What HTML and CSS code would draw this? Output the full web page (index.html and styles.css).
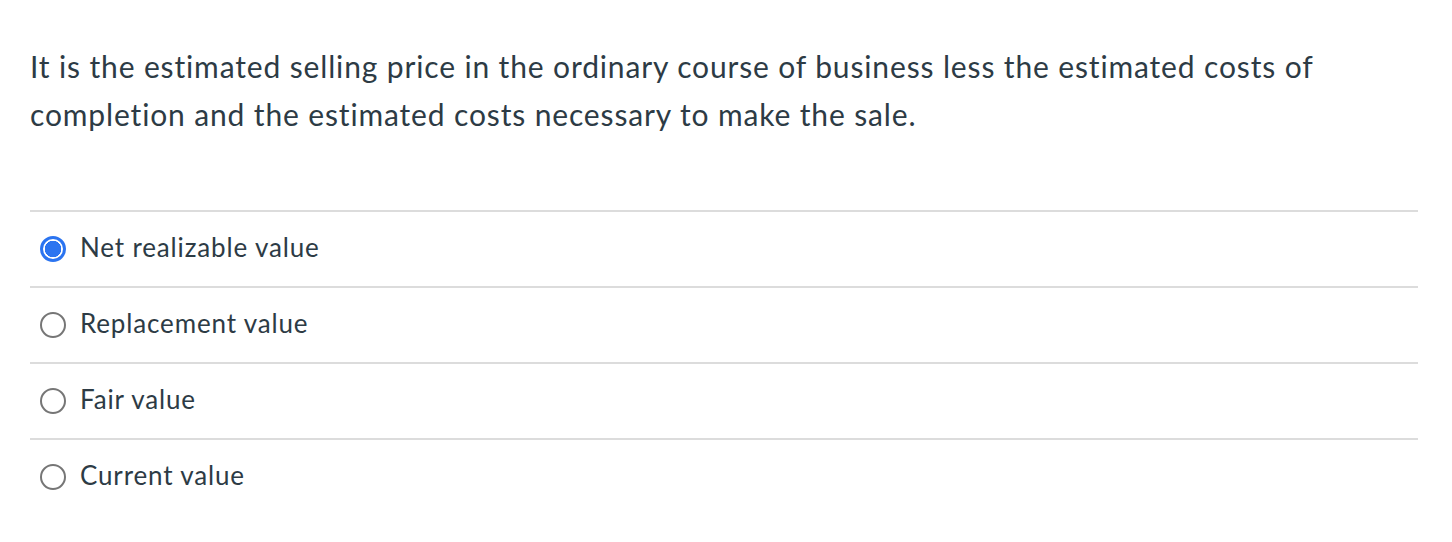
FILE: index.html
```html
<!DOCTYPE html>
<html>
<head>
<meta charset="utf-8">
<link rel="stylesheet" href="styles.css">
</head>
<body>
<div class="question">
  <p class="prompt">It is the estimated selling price in the ordinary course of business less the estimated costs of completion and the estimated costs necessary to make the sale.</p>
  <div class="answers">
    <div class="answer"><span class="radio checked"></span><span class="label">Net realizable value</span></div>
    <div class="answer"><span class="radio"></span><span class="label">Replacement value</span></div>
    <div class="answer"><span class="radio"></span><span class="label">Fair value</span></div>
    <div class="answer"><span class="radio"></span><span class="label">Current value</span></div>
  </div>
</div>
</body>
</html>
```
FILE: styles.css
```css
html, body {
  margin: 0;
  padding: 0;
  background: #ffffff;
}
body {
  font-family: Lato, "Open Sans", sans-serif;
  color: #2d3b45;
}
.question {
  padding: 42px 34px 0 30px;
}
.prompt {
  margin: 0 0 72px 0;
  font-size: 30px;
  letter-spacing: 0.86px;
  line-height: 48px;
}
.answers {
  display: flex;
  flex-direction: column;
}
.answer {
  display: flex;
  align-items: center;
  gap: 14px;
  height: 74px;
  border-top: 2px solid #dcdcdc;
  padding-left: 10px;
  font-size: 26px;
  letter-spacing: 0.85px;
}
.radio {
  box-sizing: border-box;
  width: 26px;
  height: 26px;
  border-radius: 50%;
  border: 2px solid #767676;
  background: #fff;
  flex: none;
}
.radio.checked {
  border: 3px solid #2b74f0;
  background: radial-gradient(circle, #2b74f0 0 8px, #ffffff 8.5px);
}
.label {
  margin-top: -5px;
}
```
